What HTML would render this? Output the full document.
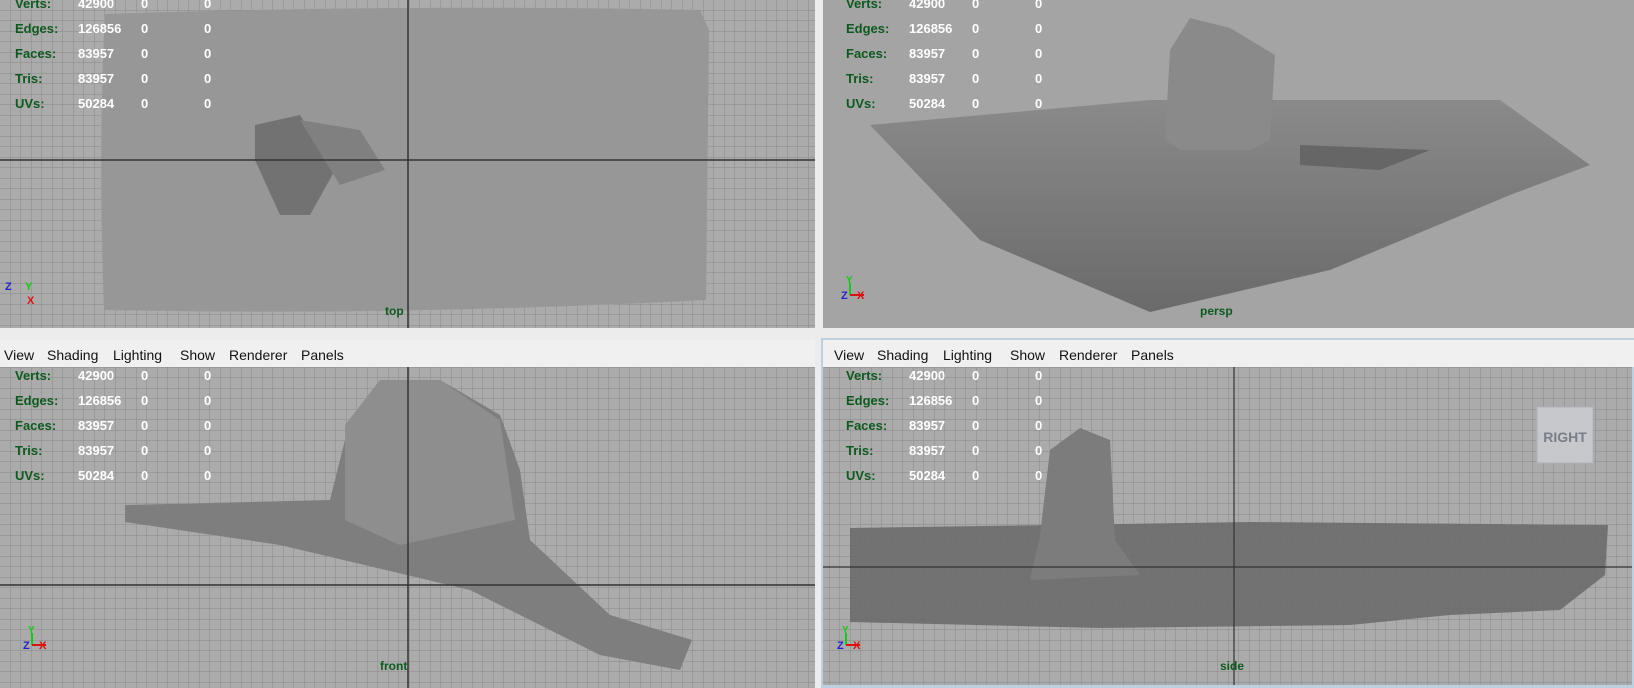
<!DOCTYPE html>
<html><head><meta charset="utf-8"><style>
html,body{margin:0;padding:0;background:#ececec;width:1634px;height:688px;overflow:hidden}
svg{display:block}
.lab{font:bold 13px "Liberation Sans",sans-serif;fill:#0d5a1e}
.val{font:bold 13px "Liberation Sans",sans-serif;fill:#fff}
.menu{font:14px "Liberation Sans",sans-serif;fill:#111}
.vn{font:bold 12px "Liberation Sans",sans-serif;fill:#0d5a1e}
</style></head><body>
<svg width="1634" height="688" viewBox="0 0 1634 688" xmlns="http://www.w3.org/2000/svg">
<defs>
<pattern id="g" width="10.5" height="10.5" patternUnits="userSpaceOnUse">
<rect width="10.5" height="10.5" fill="#ababab"/>
<path d="M10.5 0V10.5H0" fill="none" stroke="#8a8a8a" stroke-width="1"/>
</pattern>
<linearGradient id="m" x1="0" y1="0" x2="0" y2="1"><stop offset="0" stop-color="#8a8a8a"/><stop offset="1" stop-color="#6a6a6a"/></linearGradient>
<g id="stats">
<text class="lab" x="0" y="12">Verts:</text><text class="val" x="63" y="12">42900</text><text class="val" x="126" y="12">0</text><text class="val" x="189" y="12">0</text>
<text class="lab" x="0" y="37">Edges:</text><text class="val" x="63" y="37">126856</text><text class="val" x="126" y="37">0</text><text class="val" x="189" y="37">0</text>
<text class="lab" x="0" y="62">Faces:</text><text class="val" x="63" y="62">83957</text><text class="val" x="126" y="62">0</text><text class="val" x="189" y="62">0</text>
<text class="lab" x="0" y="87">Tris:</text><text class="val" x="63" y="87">83957</text><text class="val" x="126" y="87">0</text><text class="val" x="189" y="87">0</text>
<text class="lab" x="0" y="112">UVs:</text><text class="val" x="63" y="112">50284</text><text class="val" x="126" y="112">0</text><text class="val" x="189" y="112">0</text>
</g>
<g id="axis">
<path d="M10 20V8" stroke="#1c1" stroke-width="2"/><text x="6" y="8" font-size="10" font-weight="bold" fill="#1c1" font-family="Liberation Sans">Y</text>
<path d="M10 20H24" stroke="#d11" stroke-width="2"/><text x="1" y="24" font-size="11" font-weight="bold" fill="#22c" font-family="Liberation Sans">Z</text>
<text x="17" y="24" font-size="11" font-weight="bold" fill="#d11" font-family="Liberation Sans">X</text>
</g>
</defs>

<rect x="0" y="0" width="815" height="328" fill="url(#g)"/>
<path d="M105 14 Q400 4 700 10 L709 30 L706 300 Q400 316 104 310 Q98 150 105 14Z" fill="#979797"/>
<path d="M255 125 L300 115 L335 170 L310 215 L280 215 L255 160Z" fill="#727272"/>
<path d="M300 120 L360 130 L385 170 L340 185Z" fill="#808080"/>
<path d="M0 160H815M408 0V328" stroke="#333" stroke-width="1.5"/>
<use href="#stats" x="15" y="-4"/>
<g transform="translate(5,280)"><text x="0" y="10" font-size="11" font-weight="bold" fill="#22c" font-family="Liberation Sans">Z</text><text x="20" y="10" font-size="11" font-weight="bold" fill="#1c1" font-family="Liberation Sans">Y</text><text x="22" y="24" font-size="11" font-weight="bold" fill="#d11" font-family="Liberation Sans">X</text></g>
<text class="vn" x="385" y="315">top</text>

<rect x="823" y="0" width="811" height="328" fill="#a4a4a4"/>
<path d="M870 125 L1150 100 L1500 100 L1590 165 L1510 195 L1330 270 L1150 312 L980 240 Z" fill="url(#m)"/>
<path d="M1300 145 L1430 150 L1380 170 L1300 165Z" fill="#666"/>
<path d="M1165 140 L1170 50 L1190 18 L1230 28 L1275 55 L1270 140 L1250 150 L1180 150Z" fill="#8a8a8a"/>
<use href="#stats" x="846" y="-4"/>
<use href="#axis" x="840" y="275"/>
<text class="vn" x="1200" y="315">persp</text>

<rect x="0" y="336" width="815" height="352" fill="#ececec"/>
<rect x="0" y="340" width="815" height="27" fill="#f0f0f0"/>
<text class="menu" x="4" y="360">View</text><text class="menu" x="47" y="360">Shading</text><text class="menu" x="113" y="360">Lighting</text><text class="menu" x="180" y="360">Show</text><text class="menu" x="229" y="360">Renderer</text><text class="menu" x="301" y="360">Panels</text>
<rect x="0" y="367" width="815" height="321" fill="url(#g)"/>
<path d="M125 505 L330 500 L350 420 L380 380 L440 380 L500 415 L520 470 L530 540 L610 615 L692 640 L680 670 L600 655 L470 590 L280 545 L125 522Z" fill="#7e7e7e"/>
<path d="M345 425 L380 380 L440 380 L500 420 L515 520 L400 545 L345 520Z" fill="#8e8e8e"/>
<path d="M0 585H815M408 367V688" stroke="#333" stroke-width="1.5"/>
<use href="#stats" x="15" y="368"/>
<use href="#axis" x="22" y="625"/>
<text class="vn" x="380" y="670">front</text>

<rect x="821" y="338" width="813" height="350" fill="#bcd0e0"/>
<rect x="823" y="340" width="811" height="27" fill="#f0f0f0"/>
<text class="menu" x="834" y="360">View</text><text class="menu" x="877" y="360">Shading</text><text class="menu" x="943" y="360">Lighting</text><text class="menu" x="1010" y="360">Show</text><text class="menu" x="1059" y="360">Renderer</text><text class="menu" x="1131" y="360">Panels</text>
<rect x="823" y="367" width="809" height="318" fill="url(#g)"/>
<path d="M850 528 L1250 522 L1608 525 L1605 575 L1560 610 L1450 615 L1350 625 L1100 628 L850 622Z" fill="#6c6c6c" opacity=".9"/>
<path d="M1040 535 L1050 450 L1080 428 L1110 440 L1115 540 L1140 575 L1030 580Z" fill="#7c7c7c"/>
<path d="M823 567H1632M1234 367V685" stroke="#333" stroke-width="1.2"/>
<rect x="1537" y="407" width="56" height="56" fill="#c6c8cc" stroke="#b0b2b8"/>
<text x="1565" y="442" text-anchor="middle" font-family="Liberation Sans" font-weight="bold" font-size="14" fill="#7a7e88">RIGHT</text>
<use href="#stats" x="846" y="368"/>
<use href="#axis" x="836" y="625"/>
<text class="vn" x="1220" y="670">side</text>
</svg>
</body></html>
